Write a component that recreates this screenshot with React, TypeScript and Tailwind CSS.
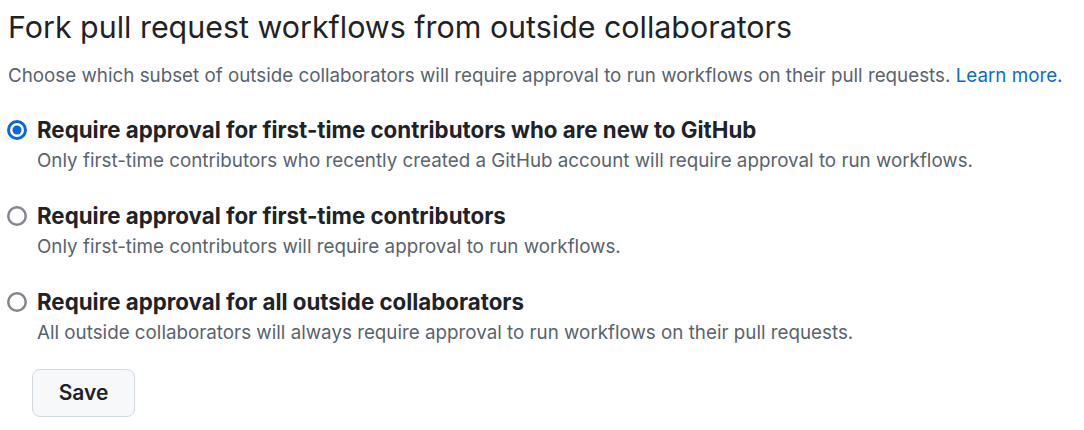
const options = [
  {
    title: 'Require approval for first-time contributors who are new to GitHub',
    desc: 'Only first-time contributors who recently created a GitHub account will require approval to run workflows.',
  },
  {
    title: 'Require approval for first-time contributors',
    desc: 'Only first-time contributors will require approval to run workflows.',
  },
  {
    title: 'Require approval for all outside collaborators',
    desc: 'All outside collaborators will always require approval to run workflows on their pull requests.',
  },
]

function Radio({ checked }: { checked: boolean }) {
  return checked ? (
    <svg width="20" height="20" viewBox="0 0 20 20" className="shrink-0">
      <circle cx="10" cy="10" r="8.5" fill="white" stroke="#0969da" strokeWidth="3" />
      <circle cx="10" cy="10" r="4.5" fill="#0969da" />
    </svg>
  ) : (
    <svg width="20" height="20" viewBox="0 0 20 20" className="shrink-0">
      <circle cx="10" cy="10" r="8.75" fill="white" stroke="#858592" strokeWidth="2.5" />
    </svg>
  )
}

export default function App() {
  return (
    <div
      className="w-[1084px] h-[430px] bg-white px-2 pt-[9px] text-[#1f2328]"
      style={{ fontFamily: 'Inter, "Liberation Sans", Arial, sans-serif' }}
    >
      <h2 className="text-[30.4px] leading-[36px] font-normal">
        Fork pull request workflows from outside collaborators
      </h2>
      <p className="mt-[19px] text-[18.8px] leading-[24px] text-[#59636e]">
        Choose which subset of outside collaborators will require approval to run workflows on their pull requests.{' '}
        <a className="text-[#0969da]">Learn more.</a>
      </p>
      <div className="mt-[28px] flex flex-col gap-[29px]">
        {options.map((o, i) => (
          <div key={o.title} className="flex items-start gap-[10px]">
            <div className="pt-[4px] -ml-[1px]">
              <Radio checked={i === 0} />
            </div>
            <div>
              <div className="text-[22.3px] leading-[28px] font-bold">{o.title}</div>
              <div className="mt-[5px] text-[18.8px] leading-[24px] text-[#59636e]">{o.desc}</div>
            </div>
          </div>
        ))}
      </div>
      <button className="mt-[24px] ml-[24px] flex h-[48px] w-[103px] items-center justify-center rounded-[8px] border border-[#d1d9e0] bg-[#f6f8fa] text-[21px] font-semibold text-[#1f2328]">
        Save
      </button>
    </div>
  )
}
